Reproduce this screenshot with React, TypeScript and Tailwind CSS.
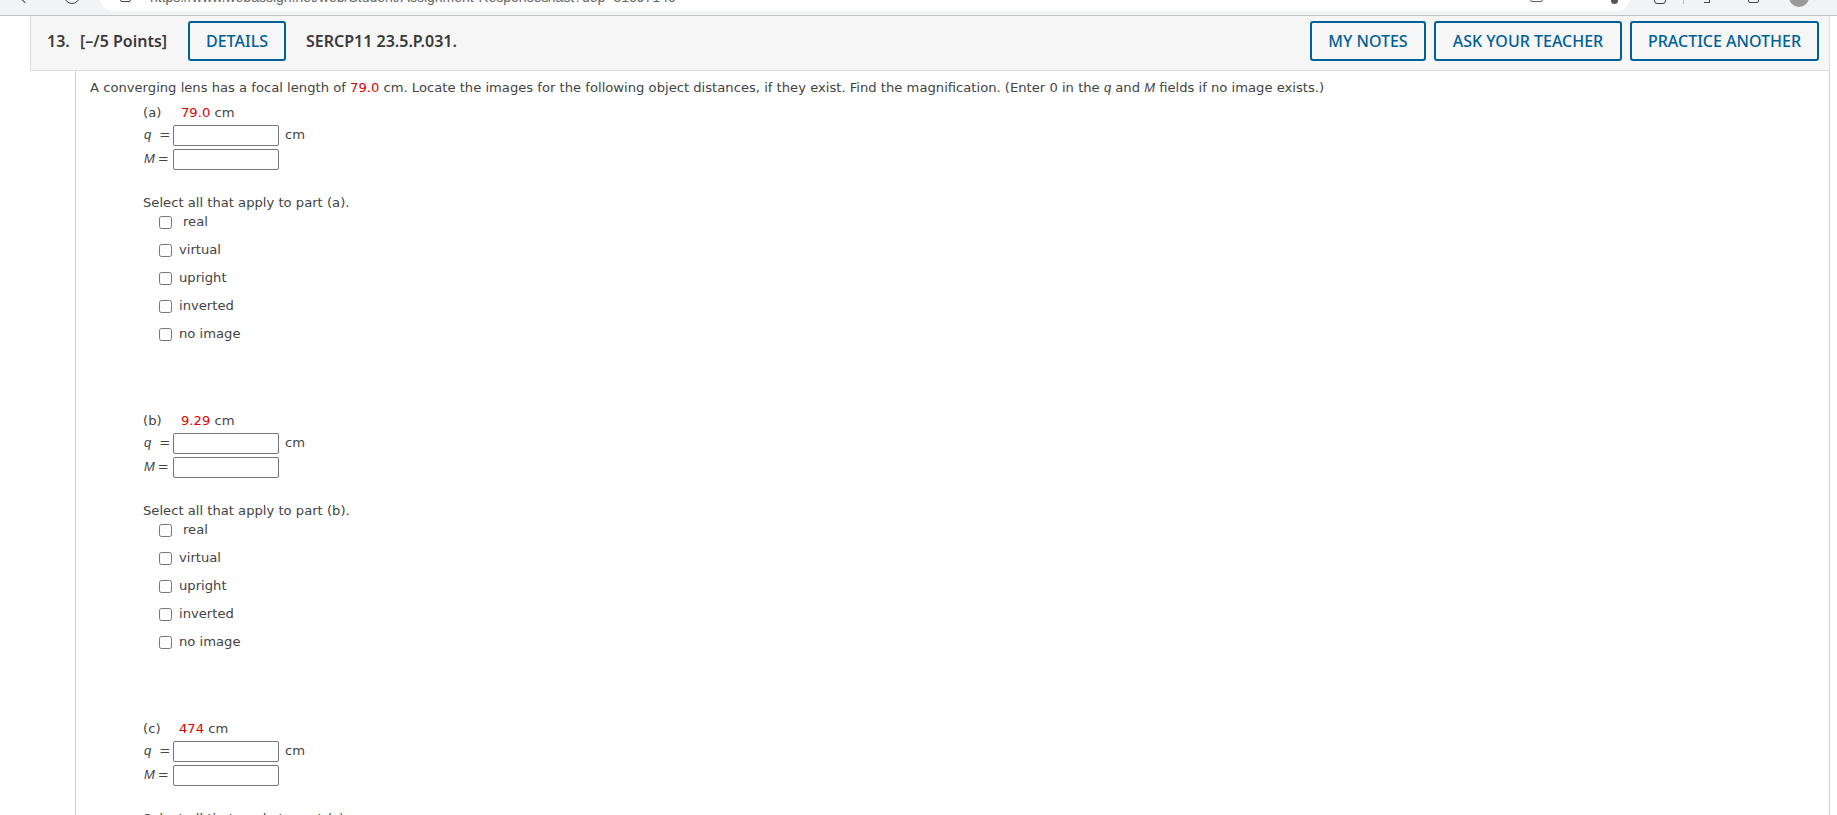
import React from 'react';

const Input = () => <div className="w-[106px] h-[21px] bg-white border border-[#767676] rounded-[2px]" />;

const Check = ({ text, first }: { text: string; first?: boolean }) => (
    <div className={`flex items-center ${first ? 'h-[20px] mb-[4px] gap-[11px]' : 'h-[28px] gap-[7px]'}`}>
        <span className="w-[13px] h-[13px] bg-white border border-[#767676] rounded-[2.5px]" />
        <span>{text}</span>
    </div>
);

const Part = ({ label, value, gap, tail }: { label: string; value: string; gap: string; tail: string }) => (
    <div className={tail}>
        <div className="flex h-[17px] items-center">
            <span className={gap}>({label})</span>
            <span><span className="text-[#e30000]">{value}</span> cm</span>
        </div>
        <div className="flex items-center h-[24px] mt-[2px]">
            <span className="w-[30px] flex gap-[8px] pl-[1px]"><i className="font-['Liberation_Sans',sans-serif] text-[13px]">q</i>=</span>
            <Input />
            <span className="ml-[6px]">cm</span>
        </div>
        <div className="flex items-center h-[24px]">
            <span className="w-[30px] flex gap-[3px] pl-[1px]"><i className="font-['Liberation_Sans',sans-serif] text-[13px]">M</i>=</span>
            <Input />
        </div>
        <div className="mt-[23px] h-[17px] leading-[17px]">Select all that apply to part ({label}).</div>
        <div className="pl-[16px] mt-[1px]">
            <Check text="real" first />
            <Check text="virtual" />
            <Check text="upright" />
            <Check text="inverted" />
            <Check text="no image" />
        </div>
    </div>
);

const Button = ({ children, width }: { children: React.ReactNode; width: string }) => (
    <button className={`${width} h-[40px] border-2 border-[#006098] rounded-[3px] text-[#006098] text-[16px] font-medium flex items-center justify-center`}>
        {children}
    </button>
);

export default function App() {
    return (
        <div className="h-[815px] overflow-hidden bg-white font-['DejaVu_Sans','Liberation_Sans',sans-serif] text-[13.15px] text-[#444]">
            {/* Browser strip cut off by the screenshot */}
            <div className="h-[16px] bg-[#f1f3f5] border-b border-[#c4c4c4] relative overflow-hidden">
                <div className="absolute left-[100px] w-[1530px] -top-[20px] h-[31px] bg-white rounded-[14px]" />
                <div className="absolute left-[22px] -top-[4px] w-[6px] h-[6px] rotate-45 border-l border-b border-[#444]" />
                <div className="absolute left-[64px] -top-[12px] w-[16px] h-[16px] rounded-full border border-[#444]" />
                <div className="absolute left-[120px] -top-[7px] w-[11px] h-[9px] rounded-[2px] border border-[#444]" />
                <span className="absolute left-[150px] -top-[13px] text-[14px] whitespace-nowrap text-[#666] font-['Liberation_Sans',sans-serif]">https://www.webassign.net/web/Student/Assignment-Responses/last?dep=31097140</span>
                <div className="absolute left-[1530px] -top-[8px] w-[13px] h-[10px] rounded-[2px] border border-[#666]" />
                <div className="absolute left-[1611px] -top-[3px] w-[7px] h-[7px] rounded-full bg-[#555]" />
                <div className="absolute left-[1654px] -top-[8px] w-[12px] h-[12px] rounded-[3px] border border-[#444]" />
                <div className="absolute left-[1683px] top-0 w-[1px] h-[4px] bg-[#bbb]" />
                <div className="absolute left-[1704px] -top-[6px] w-[6px] h-[9px] border-r border-b border-[#444]" />
                <div className="absolute left-[1748px] -top-[8px] w-[11px] h-[11px] rounded-[2px] border border-[#444]" />
                <div className="absolute left-[1789px] -top-[13px] w-[20px] h-[20px] rounded-full bg-[#999]" />
            </div>

            {/* Question header */}
            <div className="ml-[30px] mr-[7px] h-[55px] bg-[#f6f6f6] border-b border-x border-[#ddd] flex items-center pl-[16px] pr-[10px] pb-[4px] font-['Noto_Sans',sans-serif] text-[#3a3a3a]">
                <span className="text-[16px] font-semibold w-[33px]">13.</span>
                <span className="text-[16px] font-semibold w-[108px]">[–/5 Points]</span>
                <Button width="w-[98px]">DETAILS</Button>
                <span className="text-[16px] font-semibold ml-[20px]">SERCP11 23.5.P.031.</span>
                <div className="ml-auto flex gap-[8px]">
                    <Button width="w-[116px]">MY NOTES</Button>
                    <Button width="w-[188px]">ASK YOUR TEACHER</Button>
                    <Button width="w-[189px]">PRACTICE ANOTHER</Button>
                </div>
            </div>

            {/* Question body */}
            <div className="ml-[75px] mr-[7px] border-x border-[#ccc] h-[744px] pl-[14px] pt-[8px]">
                <div className="h-[17px] leading-[17px]">
                    A converging lens has a focal length of <span className="text-[#e30000]">79.0</span> cm. Locate the images for the following object distances, if they exist. Find the magnification. (Enter 0 in the <i className="font-['Liberation_Sans',sans-serif] text-[13px]">q</i> and <i className="font-['Liberation_Sans',sans-serif] text-[13px]">M</i> fields if no image exists.)
                </div>
                <div className="ml-[53px] mt-[8px]">
                    <Part label="a" value="79.0" gap="w-[38px]" tail="h-[308px]" />
                    <Part label="b" value="9.29" gap="w-[38px]" tail="h-[308px]" />
                    <Part label="c" value="474" gap="w-[36px]" tail="" />
                </div>
            </div>
        </div>
    );
}
